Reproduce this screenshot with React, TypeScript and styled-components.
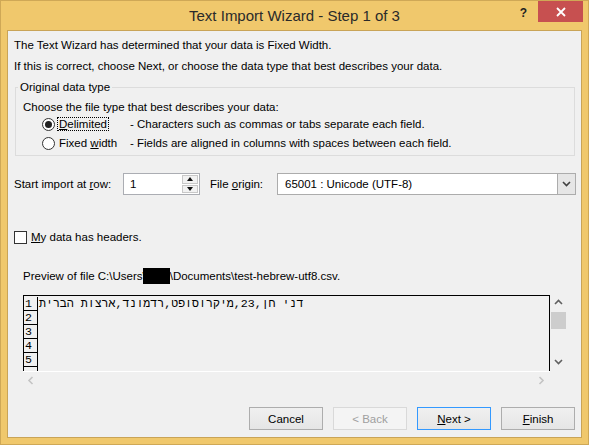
import React from 'react'
import styled, { createGlobalStyle } from 'styled-components'

const GlobalStyle = createGlobalStyle`
  html, body {
    margin: 0;
    padding: 0;
    background: #f0c86c;
  }
  body {
    width: 589px;
    height: 445px;
    overflow: hidden;
    font-family: "Liberation Sans", Arial, sans-serif;
    font-size: 11.5px;
    color: #000;
  }
`

const Chevron = ({ dir, color = '#606060' }: { dir: 'up' | 'down' | 'left' | 'right'; color?: string }) => {
  const points = {
    up: '1,5 4.5,1.5 8,5',
    down: '1,2 4.5,5.5 8,2',
    left: '5.5,1 2,4.5 5.5,8',
    right: '2.5,1 6,4.5 2.5,8',
  }[dir]
  return (
    <svg width="9" height="9" viewBox="0 0 9 9">
      <polyline points={points} fill="none" stroke={color} strokeWidth="1.6" />
    </svg>
  )
}

const rows = [
  { n: '1', text: 'דני חן,23,מיקרוסופט,רדמונד,ארצות הברית' },
  { n: '2', text: '' },
  { n: '3', text: '' },
  { n: '4', text: '' },
  { n: '5', text: '' },
  { n: '', text: '' },
]

const App = () => {
  return (
    <>
      <GlobalStyle />
      <Window>
        <TitleBar>
          <span />
          <Title>Text Import Wizard - Step 1 of 3</Title>
          <Controls>
            <HelpGlyph>?</HelpGlyph>
            <CloseButton>
              <svg width="10" height="10" viewBox="0 0 10 10">
                <path d="M1 1 L9 9 M9 1 L1 9" stroke="#fff" strokeWidth="1.8" />
              </svg>
            </CloseButton>
          </Controls>
        </TitleBar>

        <Content>
          <Line $top={6}>The Text Wizard has determined that your data is Fixed Width.</Line>
          <Line $top={5}>If this is correct, choose Next, or choose the data type that best describes your data.</Line>

          <Group>
            <Legend>Original data type</Legend>
            <Prompt>Choose the file type that best describes your data:</Prompt>
            <RadioRow $top={1}>
              <Radio $checked />
              <OptionCell>
                <OptionLabel $focused><u>D</u>elimited</OptionLabel>
              </OptionCell>
              <Hint>- Characters such as commas or tabs separate each field.</Hint>
            </RadioRow>
            <RadioRow $top={3}>
              <Radio />
              <OptionCell>
                <OptionLabel>Fixed <u>w</u>idth</OptionLabel>
              </OptionCell>
              <Hint>- Fields are aligned in columns with spaces between each field.</Hint>
            </RadioRow>
          </Group>

          <FieldRow>
            <FieldLabel $width={109}>Start import at <u>r</u>ow:</FieldLabel>
            <SpinBox>
              <SpinValue>1</SpinValue>
              <SpinButtons>
                <SpinButton><Arrow $up /></SpinButton>
                <SpinButton><Arrow /></SpinButton>
              </SpinButtons>
            </SpinBox>
            <FieldLabel $width={67} $left={10}>File <u>o</u>rigin:</FieldLabel>
            <Combo>
              <ComboValue>65001 : Unicode (UTF-8)</ComboValue>
              <ComboButton>
                <Chevron dir="down" color="#404040" />
              </ComboButton>
            </Combo>
          </FieldRow>

          <CheckRow>
            <CheckBox />
            <span><u>M</u>y data has headers.</span>
          </CheckRow>

          <PreviewCaption>
            Preview of file C:\Users\<Redacted />\Documents\test-hebrew-utf8.csv.
          </PreviewCaption>

          <Preview>
            <DataPane>
              {rows.map((row, i) => (
                <DataRow key={i}>
                  <RowNum>{row.n}</RowNum>
                  <RowText>{row.text}</RowText>
                </DataRow>
              ))}
            </DataPane>
            <VScroll>
              <ScrollArrow><Chevron dir="up" /></ScrollArrow>
              <Thumb />
              <Spacer />
              <ScrollArrow><Chevron dir="down" /></ScrollArrow>
            </VScroll>
            <HScroll>
              <ScrollArrow><Chevron dir="left" color="#c4c4c4" /></ScrollArrow>
              <Spacer />
              <ScrollArrow><Chevron dir="right" color="#c4c4c4" /></ScrollArrow>
            </HScroll>
            <span />
          </Preview>

          <ButtonBar>
            <Button>Cancel</Button>
            <Button $disabled>&lt; Back</Button>
            <Button $default><u>N</u>ext &gt;</Button>
            <Button><u>F</u>inish</Button>
          </ButtonBar>
        </Content>
      </Window>
    </>
  )
}

export default App

const Window = styled.div`
  width: 589px;
  height: 445px;
  box-sizing: border-box;
  border: 1px solid #cfa856;
  background: #f0c86c;
  display: flex;
  flex-direction: column;
`

const TitleBar = styled.div`
  height: 29px;
  display: grid;
  grid-template-columns: 1fr auto 1fr;
`

const Title = styled.div`
  font-size: 15px;
  line-height: 30px;
  color: #2a2a2a;
`

const Controls = styled.div`
  justify-self: end;
  display: flex;
  align-items: flex-start;
  margin-right: 5px;
`

const HelpGlyph = styled.span`
  font-weight: bold;
  font-size: 12px;
  line-height: 24px;
  color: #222;
  margin-right: 11px;
`

const CloseButton = styled.div`
  width: 45px;
  height: 21px;
  background: #c75050;
  display: flex;
  align-items: center;
  justify-content: center;
`

const Content = styled.div`
  flex: 1;
  margin: 0 6px 6px;
  border: 1px solid #c9a457;
  background: #f0f0f0;
  display: flex;
  flex-direction: column;
`

const Line = styled.div<{ $top: number }>`
  line-height: 16px;
  margin-top: ${p => p.$top}px;
  padding-left: 6px;
  white-space: nowrap;
`

const Group = styled.fieldset`
  margin: 5px 6px 0 7px;
  padding: 0 0 4px 7px;
  border: 1px solid #dcdcdc;
  min-width: 0;
`

const Legend = styled.legend`
  padding: 0 2px;
  margin-left: -5px;
  line-height: 16px;
`

const Prompt = styled.div`
  margin-top: 4px;
  line-height: 16px;
`

const RadioRow = styled.div<{ $top: number }>`
  display: flex;
  align-items: center;
  height: 16px;
  margin-top: ${p => p.$top}px;
  padding-left: 19px;
  white-space: nowrap;
`

const Radio = styled.span<{ $checked?: boolean }>`
  width: 13px;
  height: 13px;
  box-sizing: border-box;
  border: 1px solid #333;
  border-radius: 50%;
  background: #fff;
  margin-right: 2px;
  display: flex;
  align-items: center;
  justify-content: center;

  &::after {
    content: '';
    width: 7px;
    height: 7px;
    border-radius: 50%;
    background: ${p => (p.$checked ? '#222' : 'transparent')};
  }
`

const OptionCell = styled.span`
  width: 73px;
`

const OptionLabel = styled.span<{ $focused?: boolean }>`
  border: 1px dotted ${p => (p.$focused ? '#000' : 'transparent')};
  padding: 0 1px;
  line-height: 14px;
`

const Hint = styled.span``

const FieldRow = styled.div`
  display: flex;
  align-items: center;
  height: 22px;
  margin-top: 17px;
  padding: 0 5px 0 6px;
  white-space: nowrap;
`

const FieldLabel = styled.span<{ $width: number; $left?: number }>`
  width: ${p => p.$width}px;
  margin-left: ${p => p.$left ?? 0}px;
  flex-shrink: 0;
`

const SpinBox = styled.div`
  width: 77px;
  height: 22px;
  box-sizing: border-box;
  border: 1px solid #abadb3;
  background: #fff;
  display: flex;
  flex-shrink: 0;
`

const SpinValue = styled.span`
  flex: 1;
  padding-left: 6px;
  line-height: 20px;
`

const SpinButtons = styled.div`
  width: 16px;
  display: flex;
  flex-direction: column;
  padding: 1px 1px 1px 0;
  gap: 1px;
`

const SpinButton = styled.div`
  flex: 1;
  border: 1px solid #c8c8c8;
  background: #f2f2f2;
  display: flex;
  align-items: center;
  justify-content: center;
`

const Arrow = styled.span<{ $up?: boolean }>`
  width: 0;
  height: 0;
  border-left: 3.5px solid transparent;
  border-right: 3.5px solid transparent;
  ${p => (p.$up ? 'border-bottom: 4px solid #111;' : 'border-top: 4px solid #111;')}
`

const Combo = styled.div`
  flex: 1;
  height: 22px;
  box-sizing: border-box;
  border: 1px solid #acacac;
  background: #fff;
  display: flex;
`

const ComboValue = styled.span`
  flex: 1;
  padding-left: 7px;
  line-height: 20px;
`

const ComboButton = styled.div`
  width: 17px;
  border-left: 1px solid #acacac;
  background: #e6e6e6;
  display: flex;
  align-items: center;
  justify-content: center;
`

const CheckRow = styled.div`
  display: flex;
  align-items: center;
  height: 16px;
  margin-top: 34px;
  padding-left: 6px;
  gap: 4px;
`

const CheckBox = styled.span`
  width: 13px;
  height: 13px;
  box-sizing: border-box;
  border: 1px solid #333;
  background: #fff;
`

const PreviewCaption = styled.div`
  margin-top: 23px;
  padding-left: 15px;
  line-height: 16px;
  white-space: nowrap;
`

const Redacted = styled.span`
  display: inline-block;
  width: 27px;
  height: 16px;
  margin-left: -3px;
  background: #000;
  vertical-align: top;
`

const Preview = styled.div`
  margin: 11px 14px 0 15px;
  height: 93px;
  display: grid;
  grid-template-columns: 1fr 17px;
  grid-template-rows: 76px 17px;
`

const DataPane = styled.div`
  border: 1px solid #000;
  border-bottom: none;
  padding-top: 1px;
  overflow: hidden;
`

const DataRow = styled.div`
  display: flex;
  height: 14px;
`

const RowNum = styled.span`
  flex-shrink: 0;
  width: 14px;
  box-sizing: border-box;
  border-right: 1px solid #000;
  border-bottom: 1px solid #000;
  padding: 1px 0 0 1px;
  font-family: "Liberation Mono", "Courier New", monospace;
  font-size: 11.6px;
  line-height: 12px;
`

const RowText = styled.span`
  padding: 1px 0 0 1px;
  font-family: "Liberation Mono", "DejaVu Sans Mono", monospace;
  font-size: 11.6px;
  line-height: 12px;
  white-space: pre;
`

const VScroll = styled.div`
  display: flex;
  flex-direction: column;
`

const ScrollArrow = styled.div`
  width: 17px;
  height: 17px;
  display: flex;
  align-items: center;
  justify-content: center;
  flex-shrink: 0;
`

const Thumb = styled.div`
  height: 17px;
  margin: 0 1px;
  background: #cdcdcd;
`

const Spacer = styled.div`
  flex: 1;
`

const HScroll = styled.div`
  display: flex;
  border-top: 1px solid #fff;
  height: 16px;
  align-items: center;
`

const ButtonBar = styled.div`
  margin-top: auto;
  display: flex;
  justify-content: flex-end;
  gap: 10px;
  padding: 0 6px 7px 0;
`

const Button = styled.div<{ $disabled?: boolean; $default?: boolean }>`
  width: 74px;
  height: 23px;
  box-sizing: border-box;
  border: 1px solid ${p => (p.$default ? '#3399ff' : p.$disabled ? '#d9d9d9' : '#adadad')};
  background: ${p => (p.$disabled ? '#f4f4f4' : 'linear-gradient(#f0f0f0, #e5e5e5)')};
  color: ${p => (p.$disabled ? '#a0a0a0' : '#000')};
  display: flex;
  align-items: center;
  justify-content: center;
`
